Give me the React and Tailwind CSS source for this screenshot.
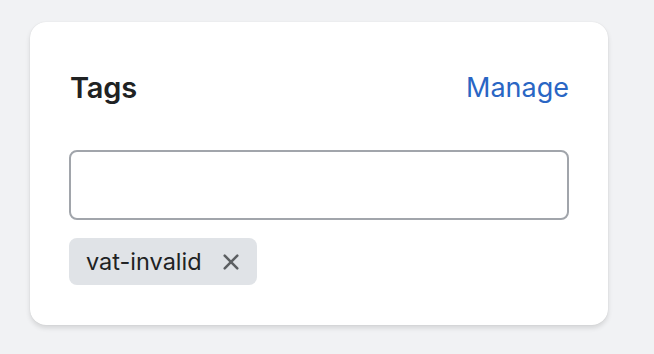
export default function App() {
  return (
    <div className="w-[654px] h-[354px] bg-[#f1f2f4] pt-[22px] pl-[30px]" style={{ fontFamily: 'Inter, "Noto Sans", sans-serif' }}>
      <div className="w-[578px] h-[303px] bg-white rounded-[16px] shadow-[0_3px_5px_rgba(0,0,0,0.12),0_0_1px_rgba(0,0,0,0.12)] px-[40px] pt-[46px] box-border">
        <div className="flex items-center justify-between">
          <h2 className="text-[29px] leading-[40px] font-semibold text-[#202223] tracking-[-0.2px]">Tags</h2>
          <button className="text-[27px] leading-[40px] text-[#2a66c4] -mr-px">Manage</button>
        </div>
        <div className="mt-[42px] h-[70px] w-[500px] -ml-px border-2 border-[#a1a5ab] rounded-[8px]"></div>
        <div className="mt-[18px] -ml-px inline-flex items-center h-[47px] bg-[#e0e3e7] rounded-[8px] pl-[17px] pr-[17px]">
          <span className="text-[23.5px] text-[#202223]">vat-invalid</span>
          <svg className="ml-[20px]" width="18" height="18" viewBox="0 0 20 20" fill="none" stroke="#5c5f62" strokeWidth="2.8" strokeLinecap="round">
            <path d="M3 3l14 14M17 3L3 17" />
          </svg>
        </div>
      </div>
    </div>
  );
}
